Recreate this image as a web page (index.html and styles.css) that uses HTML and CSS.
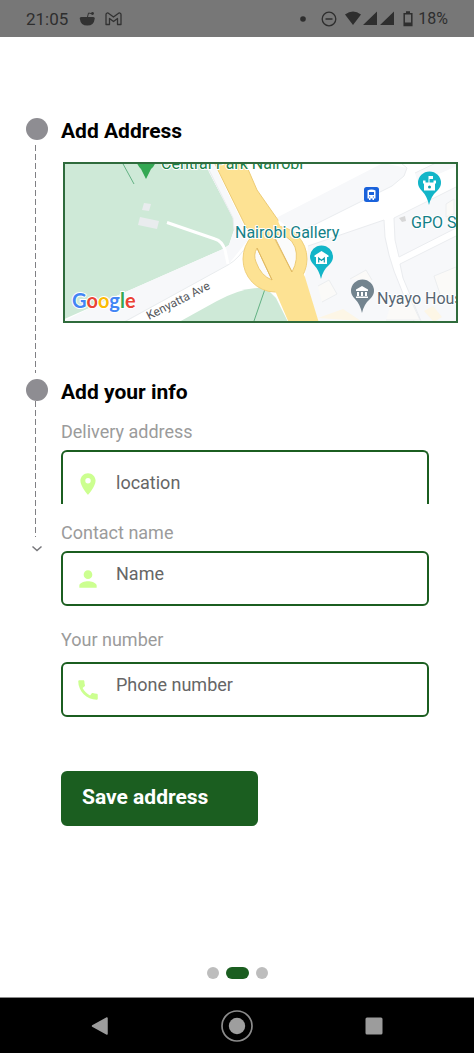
FILE: index.html
```html
<!DOCTYPE html>
<html lang="en">
<head>
<meta charset="utf-8">
<meta name="viewport" content="width=device-width, initial-scale=1">
<title>Add Address</title>
<link rel="stylesheet" href="styles.css">
</head>
<body class="screen">
<header class="status">
  <div class="status-left">
    <span class="clock">21:05</span>
    <svg class="icon-reddit" width="17" height="16" viewBox="0 0 17 16" aria-hidden="true">
      <path d="M1 8.500Q0 6 2.500 6H14q2.500 0 1.500 2.500-.5 6-7.200 6T1 8.500z" fill="#323232"/>
      <path d="M8.500 6 9.500 2l4 .8" fill="none" stroke="#323232"/>
      <circle cx="13.500" cy="2.500" r="1.400" fill="#323232"/>
    </svg>
    <svg class="icon-mail" width="17" height="14" viewBox="0 0 17 14" aria-hidden="true">
      <path d="M1 12.500V2.500C1 .8 2.800.6 3.800 1.500L8.500 5l4.700-3.500c1-.9 2.800-.7 2.800 1v10h-3.500V6.500l-4 3-4-3v6z" fill="none" stroke="#323232" stroke-width="1.300" stroke-linejoin="round"/>
    </svg>
  </div>
  <div class="status-right">
    <svg width="6" height="6" viewBox="0 0 6 6" aria-hidden="true"><circle cx="3" cy="3" r="2.800" fill="#2e2e2e"/></svg>
    <svg class="icon-dnd" width="16" height="16" viewBox="0 0 16 16" aria-hidden="true"><circle cx="8" cy="8" r="6.800" fill="none" stroke="#2e2e2e" stroke-width="1.300"/><path d="M4.500 8h7" stroke="#2e2e2e" stroke-width="1.500"/></svg>
    <svg class="icon-signal" width="52" height="15" viewBox="0 0 52 15" aria-hidden="true"><path d="M1 3.500Q9 -2.500 17 3.500L9 14zM33 .5V14H19zM50 .5V14H36z" fill="#2e2e2e"/></svg>
    <svg class="icon-battery" width="10" height="16" viewBox="0 0 10 16" aria-hidden="true"><path d="M1.200 2.800h7.600v11.700H1.200z" fill="none" stroke="#2e2e2e" stroke-width="1.500"/><path d="M3 .3h4v2H3zM1 11.500h8v3H1z" fill="#2e2e2e"/></svg>
    <span class="charge">18%</span>
  </div>
</header>

<main class="content">
  <section class="step step-map">
    <div class="rail"><span class="dot"></span><span class="line"></span></div>
    <div class="body">
      <h2 class="title">Add Address</h2>
      <svg class="map" viewBox="65 164 391 157" role="img" aria-label="Map of central Nairobi">
        <rect x="60" y="160" width="400" height="165" fill="#fff"/>
        <path d="M60 160h147l2 12 24 46 1 12-5 15-6 4-127 56-36 16z" fill="#cee9d7"/>
        <path d="M204 160h8l32 66 4 14-20 25-104 58H60l36-18 127-56 6-4 5-15-1-12-24-46z" fill="#f7f8fa"/>
        <path d="M248 243q-8 15-20 22l-104 57M209 170l24 48 1 12" fill="none" stroke="#e9ecee"/>
        <path d="M179 322l38-21q28-15 49-13l10 10 12 24z" fill="#cee9d7"/>
        <path d="M265 289 254 321M122 162l12 22" fill="none" stroke="#62b183"/>
        <path d="M167 222.500 215 239q7 2 10 11l3 14" fill="none" stroke="#fff" stroke-width="3"/>
        <path d="m144 203 7 1-2 7-7-1zM140 217l19 4-2 8-19-4z" fill="#e9ecee"/>
        <path d="m276 218 107-55 24 5-3 8-12 10-96 48zM308 246l76-26 1 17 4 18 5 16 20 50h-96l-13-43zM394 218l62-31v41l-57 29-4-17zM400 264l56-28v86h-35l-18-44zM415 173l22-11h20v4l-39 17z" fill="#f7f8fa"/>
        <path d="m296 234 96-48 12-10 3-8-6-5M308 246l76-26 1 17 4 18 5 16 20 50M456 187l-62 31 1 22 4 17 57-29M456 236l-56 28 3 14 18 43M415 173l23-11" fill="none" stroke="#eaecef"/>
        <path d="m318 286 11-6 8 14-15 8M350 279l16-9 6 10M392 300l16-6 12 26h-34M434 276l22-9v29l-14 4zM446 204l8-5v15l-8 3z" fill="#fbfaf8" stroke="#eceef0"/>
        <path d="m318 318 25-9 18 12zM424 311l9-5 9 11-8 5z" fill="#fdf6e6"/>
        <path d="m399 218 6-2 1 5-4 1z" fill="#d7d7d7"/>
        <path d="M213 160h31l13 30 21 30-6 30-26-23z" fill="#fde293" stroke="#edcb75"/>
        <ellipse cx="275" cy="259" rx="32" ry="33" fill="#fde293" stroke="#f0d07d"/>
        <path d="m245 222 10-20 22 17 18 38 10 20 14 46h-30l-13-30-20-40z" fill="#fde293"/>
        <path d="M257 248q-4 7-1 14 5 14 16 18zM272 234q18 0 23 13 4 12-3 25z" fill="#fbfbfb" stroke="#edcb75"/>
        <path d="m257 248 15 32M273 234l19 38" fill="none" stroke="#dfb75f"/>
        <g class="place">
          <text x="161" y="169" fill="#188047">Central Park Nairobi</text>
          <text x="235" y="238" fill="#128087">Nairobi Gallery</text>
          <text x="411" y="228" fill="#128087">GPO S</text>
          <text x="377" y="304" fill="#566572">Nyayo House</text>
        </g>
        <text class="road" transform="translate(149 320) rotate(-27)" fill="#55585c">Kenyatta Ave</text>
        <path d="M136 160h20q-1 6-5 9l-5 10-5-10q-4-4-5-9z" fill="#34a853"/>
        <path d="M146 160v4" stroke="#fff"/>
        <path d="M429 205q-2-9-7-14-4-4-4-8a11 11 0 0 1 23 0q0 4-4 8-6 5-8 14z" fill="#12b5c8"/>
        <path d="M424 182.500h11v8h-11zM423 180.500h2.500v3H423zM433.500 180.500h2.500v3h-2.500zM428.500 176h1v7h-1zM429 176h4v3h-4z" fill="#fff"/><circle cx="429.500" cy="187" r="1.500" fill="#129eaf"/>
        <path d="M321 279q-2-9-7-14-4-4-4-8a11 11 0 0 1 23 0q0 4-4 8-6 5-8 14z" fill="#12b5c8"/>
        <path d="M314.500 255.500 321.500 251l7 4.500v1.500h-14zM316 257h11v7h-11z" fill="#fff"/><path d="M318.700 262.500v-4.500l2.800 2.500 2.800-2.500v4.500" fill="none" stroke="#129eaf" stroke-width="1.200"/>
        <path d="M362 313q-2-9-7-14-4-4-4-8a11 11 0 0 1 23 0q0 4-4 8-6 5-8 14z" fill="#73848f"/>
        <path d="M356 289.500 362 286l6 3.500v1.500h-12zM357 292h2v4h-2zM361 292h2v4h-2zM365 292h2v4h-2zM356 296.500h12v1.500h-12z" fill="#fff"/>
        <rect x="364" y="187" width="15" height="15" rx="2.500" fill="#1a62db"/>
        <path d="M367.500 190.500q4-2 8 0v8H374v1.500h-1.500v-1.500h-2v1.500H369v-1.500h-1.500z" fill="#fff"/><path d="M369 192h5v3h-5zM369 196.500h1.200v1H369zM372.800 196.500h1.200v1h-1.200z" fill="#1a62db"/>
        <text class="brand" x="72" y="308"><tspan fill="#4285f4">G</tspan><tspan fill="#ea4335">o</tspan><tspan fill="#fbbc05">o</tspan><tspan fill="#4285f4">g</tspan><tspan fill="#34a853">l</tspan><tspan fill="#ea4335">e</tspan></text>
      </svg>
    </div>
  </section>

  <section class="step step-info">
    <div class="rail">
      <span class="dot"></span><span class="line"></span>
      <svg class="chevron" width="12" height="8" viewBox="0 0 12 8" aria-hidden="true"><path d="m1.500 1.500 4.500 4 4.500-4" fill="none" stroke="#77777b" stroke-width="1.500"/></svg>
    </div>
    <form class="body form">
      <h2 class="title">Add your info</h2>
      <label class="label label-first" for="address">Delivery address</label>
      <div class="field field-open">
        <svg class="field-icon" viewBox="0 0 24 24" aria-hidden="true"><path d="M12 2C8.130 2 5 5.130 5 9c0 5.250 7 13 7 13s7-7.750 7-13c0-3.870-3.130-7-7-7zm0 9.500a2.500 2.500 0 0 1 0-5 2.500 2.500 0 0 1 0 5z"/></svg>
        <input class="input" id="address" type="text" placeholder="location">
      </div>
      <label class="label label-next" for="name">Contact name</label>
      <div class="field">
        <svg class="field-icon" viewBox="0 0 24 24" aria-hidden="true"><path d="M12 12c2.210 0 4-1.790 4-4s-1.790-4-4-4-4 1.790-4 4 1.790 4 4 4zm0 2c-2.670 0-8 1.340-8 4v2h16v-2c0-2.660-5.330-4-8-4z"/></svg>
        <input class="input" id="name" type="text" placeholder="Name">
      </div>
      <label class="label label-last" for="phone">Your number</label>
      <div class="field">
        <svg class="field-icon" viewBox="0 0 24 24" aria-hidden="true"><path d="M20.010 15.380c-1.230 0-2.420-.2-3.530-.56-.35-.12-.74-.03-1.010.24l-1.570 1.970c-2.830-1.350-5.480-3.900-6.890-6.830l1.950-1.660c.27-.28.35-.67.24-1.020-.37-1.110-.56-2.300-.56-3.530 0-.54-.45-.99-.99-.99H4.190C3.650 3 3 3.240 3 3.990 3 13.280 10.730 21 20.010 21c.71 0 .99-.63.99-1.180v-3.450c0-.54-.45-.99-.99-.99z"/></svg>
        <input class="input" id="phone" type="tel" placeholder="Phone number">
      </div>
      <button class="save" type="button">Save address</button>
    </form>
  </section>
</main>

<div class="pager"><span class="page"></span><span class="page page-current"></span><span class="page"></span></div>

<nav class="navbar" aria-label="System">
  <button class="nav" type="button" aria-label="Back"><svg width="20" height="20" viewBox="0 0 20 20"><path d="M17 2v16L2.500 10z" fill="#9c9c9c" stroke="#9c9c9c" stroke-width="1.500" stroke-linejoin="round"/></svg></button>
  <button class="nav" type="button" aria-label="Home"><svg width="34" height="34" viewBox="0 0 34 34"><circle cx="17" cy="17" r="15" fill="none" stroke="#8c8c8c" stroke-width="1.700"/><circle cx="17" cy="17" r="8.200" fill="#9e9e9e"/></svg></button>
  <button class="nav" type="button" aria-label="Recent"><svg width="20" height="20" viewBox="0 0 20 20"><rect x="1.500" y="1.500" width="17" height="17" rx="1.500" fill="#9c9c9c"/></svg></button>
</nav>
</body>
</html>
```
FILE: styles.css
```css
* { box-sizing: border-box; }

.screen {
  margin: 0;
  min-height: 100vh;
  display: flex;
  flex-direction: column;
  background: #fff;
  color: #000;
  font-family: Roboto, "Liberation Sans", sans-serif;
}

.status {
  height: 37px;
  padding: 0 26px;
  display: flex;
  justify-content: space-between;
  background: #777;
  color: #2e2e2e;
  font-size: 16px;
  line-height: 38px;
}
.status-left, .status-right { display: flex; align-items: center; }
.clock { font-size: 17px; }
.icon-reddit { margin-left: 11px; }
.icon-mail { margin-left: 9px; }
.icon-dnd { margin-left: 15px; }
.icon-signal { margin-left: 7px; }
.icon-battery { margin-left: 7px; }
.charge { margin-left: 5px; }

.content { flex: 1; padding: 81px 16px 0 26px; }

.step {
  display: grid;
  grid-template-columns: 22px 1fr;
  column-gap: 13px;
}
.step-map { padding-bottom: 2px; }

.rail { display: flex; flex-direction: column; }
.dot {
  width: 22px;
  height: 22px;
  border-radius: 50%;
  background: #8e8d92;
}
.line {
  flex: 1;
  width: 1px;
  margin-left: 9px;
  background: repeating-linear-gradient(#808084 0 6px, transparent 6px 9px);
}
.step-map .line { margin: 5px 0 4px 9px; }
.step-info .rail { height: 174px; }
.chevron { margin: 8px 0 0 5px; }

.title {
  margin: 0;
  font-size: 21px;
  line-height: 26px;
  font-weight: 700;
}

.map {
  display: block;
  width: calc(100% - 2px);
  margin: 18px 0 54px 2px;
  border: 2px solid #2f6b3c;
}
.place { font-size: 16px; }
.road { font-size: 12px; }
.place, .road { stroke: #fff; stroke-width: 2px; paint-order: stroke; }
.brand {
  font-family: Lato, sans-serif;
  font-size: 20px;
  font-weight: 700;
  stroke: #fff;
  stroke-width: 2px;
  paint-order: stroke;
}

.form {
  display: flex;
  flex-direction: column;
  padding-right: 29px;
}
.label {
  margin-bottom: 7px;
  color: #9b9b9b;
  font-size: 18px;
  line-height: 22px;
}
.label-first { margin-top: 16px; }
.label-next { margin-top: 18px; }
.label-last { margin: 23px 0 11px; }

.field {
  height: 55px;
  padding-left: 12px;
  display: flex;
  align-items: center;
  border: 2px solid #1b5e20;
  border-radius: 6px;
}
.field-open {
  height: 54px;
  padding-top: 12px;
  border-bottom: 0;
  border-radius: 6px 6px 0 0;
}
.field-icon { flex: none; width: 26px; height: 26px; fill: #ccff90; }
.input {
  flex: 1;
  min-width: 0;
  height: 100%;
  margin-left: 15px;
  padding: 0 0 10px;
  border: 0;
  outline: 0;
  background: none;
  color: #333;
  font: inherit;
  font-size: 18px;
}
.field-open .input { padding-bottom: 4px; }
.input::placeholder { color: #666; opacity: 1; }

.save {
  width: 197px;
  height: 55px;
  margin-top: 54px;
  padding: 0 21px 3px;
  border: 0;
  border-radius: 6px;
  background: #1b5e20;
  color: #fff;
  font: inherit;
  font-size: 21px;
  font-weight: 700;
  text-align: left;
}

.pager {
  padding: 24px 0 18px;
  display: flex;
  justify-content: center;
  gap: 7px;
}
.page {
  width: 12px;
  height: 12px;
  border-radius: 6px;
  background: #bdbdbd;
}
.page-current { width: 23px; background: #1b5e20; }

.navbar {
  height: 56px;
  padding: 0 31px;
  display: grid;
  grid-template-columns: repeat(3, 1fr);
  border-top: 1px solid #8a8a8a;
  background: #000;
}
.nav {
  padding: 0;
  display: grid;
  place-items: center;
  border: 0;
  background: none;
}
```
